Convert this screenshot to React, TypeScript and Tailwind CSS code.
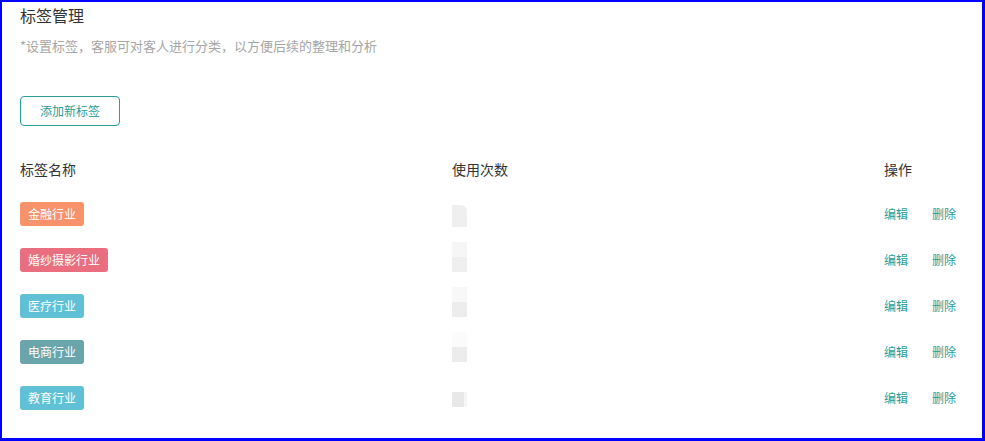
import React from "react";

type Row = {
  name: string;
  color: string;
  blocks: React.ReactNode;
};

const rows: Row[] = [
  {
    name: "金融行业",
    color: "bg-[#f8926a]",
    blocks: (
      <div className="mt-[14px] h-[22px] w-[15px] rounded-tr-[6px] bg-[#efefef]" />
    ),
  },
  {
    name: "婚纱摄影行业",
    color: "bg-[#e86e80]",
    blocks: (
      <div className="mt-[5px] flex flex-col">
        <div className="h-[15px] w-[15px] bg-[#f6f6f6]" />
        <div className="h-[15px] w-[15px] bg-[#efefef]" />
      </div>
    ),
  },
  {
    name: "医疗行业",
    color: "bg-[#60c1d6]",
    blocks: (
      <div className="mt-[4px] flex flex-col">
        <div className="h-[15px] w-[15px] bg-[#f8f8f8]" />
        <div className="h-[15px] w-[15px] bg-[#ededed]" />
      </div>
    ),
  },
  {
    name: "电商行业",
    color: "bg-[#6aa5ab]",
    blocks: (
      <div className="mt-[3px] flex flex-col">
        <div className="h-[15px] w-[15px] bg-[#fbfbfb]" />
        <div className="h-[15px] w-[15px] bg-[#ececec]" />
      </div>
    ),
  },
  {
    name: "教育行业",
    color: "bg-[#60c1d6]",
    blocks: (
      <div className="mt-[17px] flex h-[15px] w-[15px] bg-[#e8e8e8]">
        <div className="ml-auto h-[15px] w-[3px] bg-[#f6f6f6]" />
      </div>
    ),
  },
];

export default function App() {
  return (
    <div
      className="h-[441px] w-[985px] bg-[#0000ff] pb-[3px] pl-[2px] pr-[3px] pt-[2px]"
      style={{ fontFamily: '"Noto Sans CJK SC", "Noto Sans", sans-serif' }}
    >
      <div className="h-full w-full bg-white pl-[18px] pt-[3px]">
        <div className="h-[20px] text-[16px] leading-[20px] text-[#333333]">标签管理</div>
        <div className="mt-[11px] h-[20px] text-[13px] leading-[20px] text-[#a6a6a6]">
          *设置标签，客服可对客人进行分类，以方便后续的整理和分析
        </div>
        <button className="mt-[40px] flex h-[30px] w-[100px] items-center justify-center rounded-[4px] border border-[#2a9d96] bg-white text-[12px] text-[#2a9d96]">
          添加新标签
        </button>
        <div className="mt-[33px] grid h-[20px] grid-cols-[432px_432px_1fr] text-[14px] leading-[20px] text-[#333333]">
          <div>标签名称</div>
          <div>使用次数</div>
          <div>操作</div>
        </div>
        <div className="mt-[12px] flex flex-col">
          {rows.map((r) => (
            <div key={r.name} className="grid h-[46px] grid-cols-[432px_432px_1fr]">
              <div className="flex items-center">
                <span
                  className={`${r.color} flex h-[24px] items-center rounded-[3px] px-[8px] text-[12px] text-white`}
                >
                  {r.name}
                </span>
              </div>
              <div className="flex flex-col items-start">{r.blocks}</div>
              <div className="flex items-center gap-[24px] text-[12px] text-[#2a9d96]">
                <span>编辑</span>
                <span>删除</span>
              </div>
            </div>
          ))}
        </div>
      </div>
    </div>
  );
}
